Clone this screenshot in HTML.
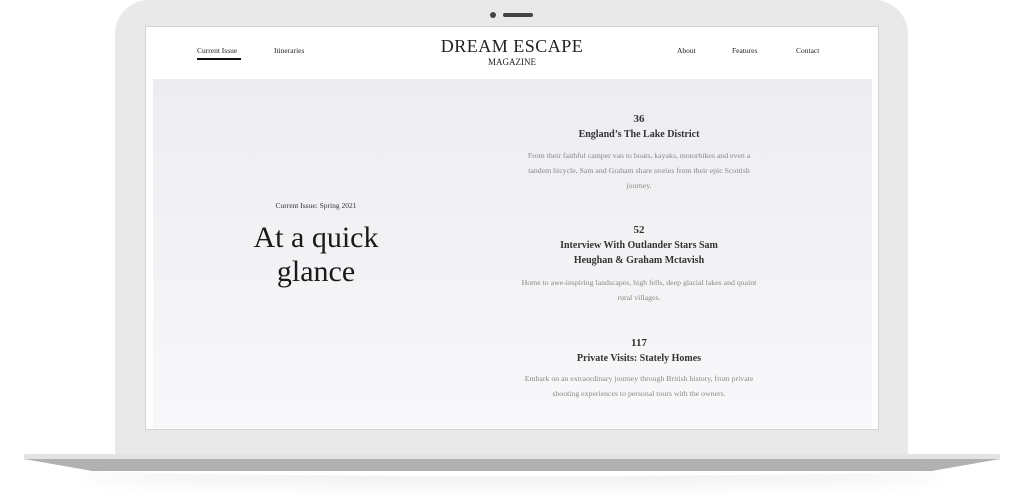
<!DOCTYPE html>
<html><head><style>
*{margin:0;padding:0;box-sizing:border-box}
body{width:1024px;height:501px;background:#fff;position:relative;overflow:hidden;font-family:"Liberation Serif",serif;color:#222}
.abs{position:absolute}
.lid{left:115px;top:0;width:793px;height:460px;background:#e9e9e9;border-radius:34px 34px 0 0}
.screen{left:145px;top:26px;width:734px;height:404px;background:#fff;border:1px solid #d4d4d4}
.content{left:153px;top:79px;width:719px;height:349px;background:linear-gradient(#edecf0,#f8f8fa)}
.nav{font-size:7.5px;color:#222;top:46px}
.c{text-align:center}
.num{font-size:11px;font-weight:bold;color:#333}
.tit{font-size:10px;font-weight:bold;color:#333;line-height:15px}
.body{font-size:7.8px;color:#888;line-height:15px;margin-left:auto;margin-right:auto}
</style></head><body>
<div class="abs" style="left:80px;top:462px;width:864px;height:14px;box-shadow:0 8px 16px rgba(0,0,0,.08);border-radius:50%"></div>
<div class="abs lid"></div>
<div class="abs" style="left:490px;top:12px;width:6px;height:6px;border-radius:50%;background:#444"></div>
<div class="abs" style="left:503px;top:13px;width:30px;height:4px;border-radius:2px;background:#444"></div>
<div class="abs" style="left:24px;top:454px;width:976px;height:6px;background:#e3e3e3;border-radius:2px"></div>
<div class="abs" style="left:24px;top:459px;width:976px;height:12px;background:#b1b1b1;clip-path:polygon(0 0,100% 0,93% 100%,7% 100%)"></div>
<div class="abs screen"></div>
<div class="abs content"></div>
<div class="abs nav" style="left:197px">Current Issue</div>
<div class="abs" style="left:197px;top:58px;width:44px;height:2px;background:#111"></div>
<div class="abs nav" style="left:274px">Itineraries</div>
<div class="abs nav" style="left:677px">About</div>
<div class="abs nav" style="left:732px">Features</div>
<div class="abs nav" style="left:796px">Contact</div>
<div class="abs c" style="left:412px;top:36px;width:200px;font-size:18px;letter-spacing:.5px;color:#222">DREAM ESCAPE</div>
<div class="abs c" style="left:412px;top:57px;width:200px;font-size:9px;color:#222">MAGAZINE</div>
<div class="abs c" style="left:216px;top:201px;width:200px;font-size:7.5px;color:#333">Current Issue: Spring 2021</div>
<div class="abs c" style="left:196px;top:221px;width:240px;font-size:30px;line-height:34px;color:#1a1a1a">At a quick<br>glance</div>
<div class="abs c" style="left:509px;top:113px;width:260px">
<div class="num">36</div><div class="tit" style="margin-top:2px">England’s The Lake District</div>
<div class="body" style="margin-top:6px;width:240px">From their faithful camper van to boats, kayaks, motorbikes and even a tandem bicycle, Sam and Graham share stories from their epic Scottish journey.</div></div>
<div class="abs c" style="left:509px;top:224px;width:260px">
<div class="num">52</div><div class="tit" style="margin-top:2px">Interview With Outlander Stars Sam<br>Heughan &amp; Graham Mctavish</div>
<div class="body" style="margin-top:7px;width:250px">Home to awe-inspiring landscapes, high fells, deep glacial lakes and quaint rural villages.</div></div>
<div class="abs c" style="left:509px;top:337px;width:260px">
<div class="num">117</div><div class="tit" style="margin-top:2px">Private Visits: Stately Homes</div>
<div class="body" style="margin-top:5px;width:250px">Embark on an extraordinary journey through British history, from private shooting experiences to personal tours with the owners.</div></div>
</body></html>
